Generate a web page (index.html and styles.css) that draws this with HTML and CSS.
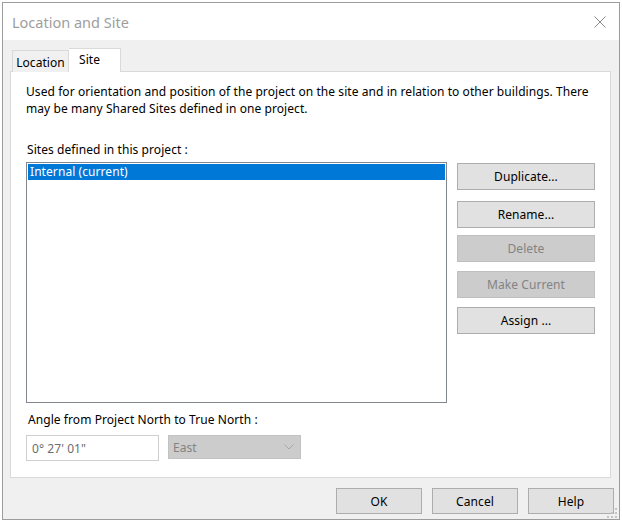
FILE: index.html
```html
<!DOCTYPE html>
<html>
<head>
<meta charset="utf-8">
<link rel="stylesheet" href="styles.css">
</head>
<body>
<div class="window">
  <div class="titlebar">
    <span class="title">Location and Site</span>
    <svg class="close" width="12" height="12" viewBox="0 0 12 12"><path d="M0.5 0.5 L11.5 11.5 M11.5 0.5 L0.5 11.5" stroke="#8a8a8a" stroke-width="1" fill="none"/></svg>
  </div>
  <div class="client">
    <div class="tabs">
      <div class="tab">Location</div>
      <div class="tab active">Site</div>
    </div>
    <div class="panel">
      <p class="desc">Used for orientation and position of the project on the site and in relation to other buildings. There<br>may be many Shared Sites defined in one project.</p>
      <div class="label sites-label">Sites defined in this project :</div>
      <div class="sites-row">
        <div class="listbox">
          <div class="item selected">Internal (current)</div>
        </div>
        <div class="actions">
          <div class="btn b-dup">Duplicate...</div>
          <div class="btn b-ren">Rename...</div>
          <div class="btn disabled b-del">Delete</div>
          <div class="btn disabled b-cur">Make Current</div>
          <div class="btn b-asg">Assign ...</div>
        </div>
      </div>
      <div class="label angle-label">Angle from Project North to True North :</div>
      <div class="angle-row">
        <div class="textbox">0° 27' 01"</div>
        <div class="combo">
          <span>East</span>
          <svg width="10" height="6" viewBox="0 0 10 6"><path d="M0.5 0.5 L5 5 L9.5 0.5" stroke="#a8a8a8" stroke-width="1" fill="none"/></svg>
        </div>
      </div>
    </div>
    <div class="footer">
      <div class="btn fbtn">OK</div>
      <div class="btn fbtn">Cancel</div>
      <div class="btn fbtn">Help</div>
    </div>
    <svg class="grip" width="10" height="10" viewBox="0 0 10 10">
      <rect x="8" y="0" width="2" height="2" fill="#c4c4c4"/>
      <rect x="4" y="4" width="2" height="2" fill="#c4c4c4"/>
      <rect x="8" y="4" width="2" height="2" fill="#c4c4c4"/>
      <rect x="0" y="8" width="2" height="2" fill="#c4c4c4"/>
      <rect x="4" y="8" width="2" height="2" fill="#c4c4c4"/>
      <rect x="8" y="8" width="2" height="2" fill="#c4c4c4"/>
    </svg>
  </div>
</div>
</body>
</html>
```
FILE: styles.css
```css
* { box-sizing: border-box; }
html, body {
  margin: 0;
  padding: 0;
  width: 622px;
  height: 524px;
  overflow: hidden;
  background: #ffffff;
  font-family: "Noto Sans", "Open Sans", sans-serif;
  font-size: 12px;
  letter-spacing: 0.07px;
  color: #000;
}
.window {
  margin: 2px 0 0 2px;
  width: 618px;
  height: 518px;
  border: 1px solid #9c9c9c;
  display: flex;
  flex-direction: column;
  background: #f0f0f0;
}
.titlebar {
  height: 37px;
  background: #fff;
  display: flex;
  align-items: center;
  padding-left: 9px;
  padding-right: 13px;
  flex: none;
}
.title {
  font-size: 14.5px;
  letter-spacing: 0;
  color: #9e9e9e;
  flex: 1;
  padding-top: 1px;
}
.close { flex: none; }
.client {
  flex: 1;
  position: relative;
  display: flex;
  flex-direction: column;
}
.tabs {
  display: flex;
  align-items: flex-end;
  margin: 8px 0 -1px 9px;
  height: 24px;
  position: relative;
  z-index: 1;
}
.tab {
  height: 22px;
  width: 57px;
  border: 1px solid #d9d9d9;
  border-bottom: none;
  background: #f0f0f0;
  display: flex;
  align-items: center;
  justify-content: center;
  padding-top: 2px;
}
.tab.active {
  height: 24px;
  width: 52px;
  background: #fff;
  border-left: none;
  padding-top: 0;
  padding-bottom: 2px;
  justify-content: flex-start;
  padding-left: 10px;
}
.panel {
  margin-left: 7px;
  width: 601px;
  height: 407px;
  border: 1px solid #d9d9d9;
  background: #fff;
  display: flex;
  flex-direction: column;
  padding-left: 15px;
  flex: none;
}
.desc {
  margin: 11px 0 0 0;
  line-height: 17px;
  white-space: nowrap;
}
.label { line-height: 17px; }
.sites-label { margin-top: 24px; padding-left: 1px; }
.sites-row {
  display: flex;
  margin-top: 4px;
  align-items: flex-start;
}
.listbox {
  width: 421px;
  height: 241px;
  border: 1px solid #828790;
  padding: 1px;
  flex: none;
}
.item {
  height: 16px;
  line-height: 16px;
  padding-left: 2px;
}
.item.selected {
  background: #0078d7;
  color: #fff;
}
.actions {
  margin-left: 10px;
  display: flex;
  flex-direction: column;
  width: 138px;
}
.btn {
  height: 27px;
  border: 1px solid #adadad;
  background: #e1e1e1;
  display: flex;
  align-items: center;
  justify-content: center;
}
.btn.disabled {
  background: #cccccc;
  border-color: #bfbfbf;
  color: #838383;
}
.b-dup { margin-top: 1px; }
.b-ren { margin-top: 11px; }
.b-del { margin-top: 7px; }
.b-cur { margin-top: 9px; }
.b-asg { margin-top: 9px; }
.angle-label { margin-top: 8px; padding-left: 2px; }
.angle-row {
  display: flex;
  margin-top: 7px;
  align-items: flex-start;
}
.textbox {
  width: 133px;
  height: 26px;
  border: 1px solid #cfcfcf;
  color: #6d6d6d;
  padding-left: 5px;
  display: flex;
  align-items: center;
}
.combo {
  margin-left: 9px;
  width: 133px;
  height: 24px;
  background: #cccccc;
  border: 1px solid #c2c2c2;
  color: #838383;
  display: flex;
  align-items: center;
  justify-content: space-between;
  padding: 0 6px 0 4px;
}
.footer {
  display: flex;
  justify-content: flex-end;
  gap: 10px;
  margin-top: 10px;
  padding-right: 5px;
}
.fbtn {
  width: 86px;
  height: 26px;
}
.grip {
  position: absolute;
  right: 2px;
  bottom: 1px;
}
```
